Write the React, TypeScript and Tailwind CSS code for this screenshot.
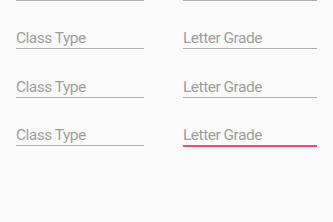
const rows = [
  { h: 'h-[48px]', hf: 'h-[48px]', focused: false },
  { h: 'h-[49px]', hf: 'h-[49px]', focused: false },
  { h: 'h-[48px]', hf: 'h-[49px]', focused: true },
];

function Field({ label, h, focused }: { label: string; h: string; focused?: boolean }) {
  return (
    <div
      className={`${h} flex items-end ${
        focused ? 'border-b-2 border-[#ff4081]' : 'border-b border-[#b0b0b0]'
      }`}
    >
      <span className="text-[15.5px] leading-[19px] tracking-[-0.5px] text-[#9e9e9e]">{label}</span>
    </div>
  );
}

export default function App() {
  return (
    <div
      className="w-[333px] h-[222px] bg-[#fafafa] overflow-hidden"
      style={{ fontFamily: 'Roboto, "Noto Sans", sans-serif' }}
    >
      <div className="pl-4 pr-4 grid grid-cols-[128px_134px] gap-x-[39px] items-start">
        <div className="border-b border-[#b0b0b0]" />
        <div className="border-b border-[#b0b0b0]" />
        {rows.map((r, i) => (
          <div key={i} className="contents">
            <Field label="Class Type" h={r.h} />
            <Field label="Letter Grade" h={r.focused ? r.hf : r.h} focused={r.focused} />
          </div>
        ))}
      </div>
    </div>
  );
}
